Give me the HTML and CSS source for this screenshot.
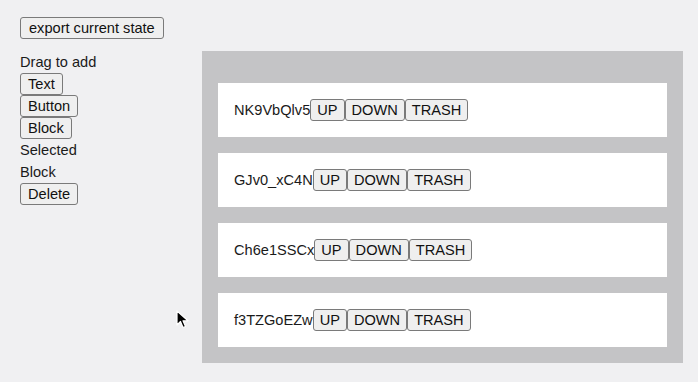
FILE: index.html
```html
<!DOCTYPE html>
<html lang="en">
<head>
    <meta charset="UTF-8">
    <title>Block editor</title>
    <link rel="stylesheet" href="styles.css">
</head>
<body>
    <div class="page">
        <div class="toolbar">
            <button class="btn btn-export">export current state</button>
        </div>

        <div class="editor">
            <div class="sidebar">
                <div class="label">Drag to add</div>
                <div><button class="btn">Text</button></div>
                <div><button class="btn">Button</button></div>
                <div><button class="btn">Block</button></div>
                <div class="label">Selected</div>
                <div class="label">Block</div>
                <div><button class="btn">Delete</button></div>
            </div>

            <div class="canvas">
                <div class="block">
                    <span class="block-id">NK9VbQlv5</span><button class="btn">UP</button><button class="btn">DOWN</button><button class="btn">TRASH</button>
                </div>
                <div class="block">
                    <span class="block-id">GJv0_xC4N</span><button class="btn">UP</button><button class="btn">DOWN</button><button class="btn">TRASH</button>
                </div>
                <div class="block">
                    <span class="block-id">Ch6e1SSCx</span><button class="btn">UP</button><button class="btn">DOWN</button><button class="btn">TRASH</button>
                </div>
                <div class="block">
                    <span class="block-id">f3TZGoEZw</span><button class="btn">UP</button><button class="btn">DOWN</button><button class="btn">TRASH</button>
                </div>
            </div>
        </div>
    </div>

    <!-- mouse pointer left in the screenshot -->
    <svg class="cursor" width="14" height="20" viewBox="0 0 14 20">
        <path d="M1 1 L1 15 L4.5 11.5 L7 17.5 L9.5 16.5 L7 10.8 L12 10.8 Z" fill="#000" stroke="#fff" stroke-width="1.2" stroke-linejoin="round"/>
    </svg>
</body>
</html>
```

FILE: styles.css
```css
body {
    margin: 0;
    padding: 0;
    background-color: #f0f0f2;
    color: #1a1a1a;
    font-family: "Liberation Sans", Arial, sans-serif;
    font-size: 14.6px;
    line-height: 22px;
}

.page {
    padding: 17px 15px 0 20px;
}

.toolbar {
    height: 22px;
    margin-bottom: 12px;
}

.btn {
    font-family: inherit;
    font-size: 14.6px;
    line-height: 18px;
    height: 22px;
    margin: 0;
    padding: 1px 7px;
    color: #111;
    background-color: #efefef;
    border: 1px solid #7a7a7a;
    border-radius: 3px;
    vertical-align: top;
}

.btn-export {
    padding: 1px 8px;
}

.editor {
    display: grid;
    grid-template-columns: 182px 1fr;
}

.sidebar div {
    height: 22px;
}

/* grey drop area with the blocks */
.canvas {
    background-color: #c4c4c6;
    padding: 32px 16px 16px;
    display: flex;
    flex-direction: column;
    gap: 16px;
}

.block {
    background-color: #fff;
    padding: 16px;
    height: 22px;
    display: flex;
    align-items: center;
}

.block .btn {
    padding: 1px 6px;
}

.block-id {
    line-height: 22px;
}

.cursor {
    position: absolute;
    left: 176px;
    top: 310px;
}
```
